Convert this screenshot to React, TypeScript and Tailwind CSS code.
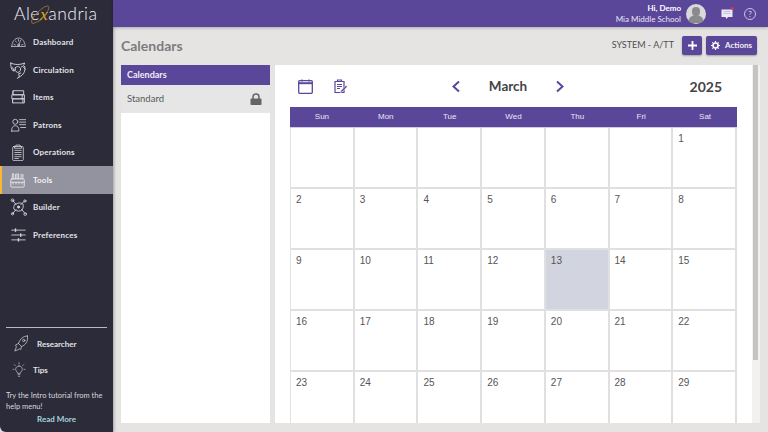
import React from "react";

const S = ({ children, w = 24, h = 24, vb = "0 0 24 24", c = "#cfcfd4", sw = 1 }: any) => (
  <svg width={w} height={h} viewBox={vb} fill="none" stroke={c} strokeWidth={sw} strokeLinecap="round" strokeLinejoin="round">
    {children}
  </svg>
);

const icons: Record<string, React.ReactNode> = {
  Dashboard: (
    <S w={15} h={10} vb="0 0 30 20" sw={1.5}>
      <path d="M1.500 19h27C28 9 22 2 15 2S2 9 1.500 19z" />
      <path d="M15 17l4-10M6 15l3 1M9 8l2 2.500M15 5v3M24 15l-3 1" />
      <circle cx="15" cy="16" r="2" />
    </S>
  ),
  Circulation: (
    <S w={16} h={18} vb="0 0 24 27" sw={1.5}>
      <path d="M1 3c6 3 14 3 21 0-1 3-2 5-5 6M1 3c0 5 1 10 4 12l3-2M22 8c2 7-2 13-8 16l-1-5 3-1M4 10l2 5" />
      <path d="M8 10c3-3 7-2 8 2 0 3-2 5-5 5-3-1-4-4-3-7z" />
      <path d="M11 26l3-2M20 9l3 3" />
    </S>
  ),
  Items: (
    <S w={15} h={14} vb="0 0 20 19" sw={1.300}>
      <path d="M3 1h14v5.500H3zM3 1c-1 2-1 4 0 5.500" />
      <path d="M1.500 6.500H18V12H1.500zM15 6.500V12" />
      <path d="M2.500 12H18v5.500H2.500zM2.500 12c-1 2-1 4 0 5.500M16 12v5.500" />
    </S>
  ),
  Patrons: (
    <S w={15} h={14} vb="0 0 21 19" sw={1.200}>
      <circle cx="6" cy="5" r="3.500" />
      <path d="M1 18c-.5-5 2-7.500 5-7.500s5.500 2.500 5 7.500H1zM12 2h8.500M12 5.500h8.500M12 9h8.500M13.500 13h7" />
    </S>
  ),
  Operations: (
    <S w={12} h={17} vb="0 0 17 24" sw={1.200}>
      <rect x="1" y="3.500" width="15" height="20" rx="1.500" />
      <path d="M5.500 3.500V1.500h6v2h2v2.500h-10V3.500zM4 9h9M4 12h9M4 15h9M4 18h9M4 20.500h5" />
    </S>
  ),
  Tools: (
    <S w={15} h={16} vb="0 0 20 21" c="#ececef" sw={1.100}>
      <rect x="1" y="9" width="18" height="11" rx="1.500" />
      <path d="M1 13.500h18M3 9V4l1-2.500L5 4v5M7.500 9V2.500h2V9M11.500 9V2M14.500 9l.5-6 2.500.5L17 9M4 13.500v2.500M8 13.500v2.500M12 13.500v2.500M16 13.500v2.500" />
    </S>
  ),
  Builder: (
    <S w={17} h={18} vb="0 0 22 24" sw={1.200}>
      <path d="M3 3l5 6M19 4l-5 5M8 15l-5 6M15 15l5 6" />
      <path d="M6 9c3-3 9-3 11-1 1 3 0 8-3 9-3 1-8 0-9-2-1-2 0-5 1-6z" />
      <circle cx="3" cy="3" r="1.800" />
      <circle cx="19.500" cy="4" r="1.500" />
      <circle cx="3" cy="21" r="1.500" />
      <circle cx="20" cy="21.500" r="1.800" />
      <circle cx="11" cy="12" r="1.500" fill="#cfcfd4" />
    </S>
  ),
  Preferences: (
    <S w={15} h={14} vb="0 0 20 18" sw={1.200}>
      <path d="M1 2.500h18M1 9h18M1 15.500h18" />
      <path d="M6 1v3M13 7.500v3M10 14v3" strokeWidth="2" />
    </S>
  ),
};

const nav = ["Dashboard", "Circulation", "Items", "Patrons", "Operations", "Tools", "Builder", "Preferences"];
const days = ["Sun", "Mon", "Tue", "Wed", "Thu", "Fri", "Sat"];
const weeks: (number | null)[][] = [
  [null, null, null, null, null, null, 1],
  [2, 3, 4, 5, 6, 7, 8],
  [9, 10, 11, 12, 13, 14, 15],
  [16, 17, 18, 19, 20, 21, 22],
  [23, 24, 25, 26, 27, 28, 29],
];

export default function App() {
  return (
    <div className="flex h-[432px] w-[768px] overflow-hidden bg-[#e5e4e3] font-['Lato',sans-serif]">
      <aside className="flex h-full w-[113px] shrink-0 flex-col rounded-bl-md bg-[#2b2b3a] text-[#e3e3e6] shadow-[1px_0_3px_rgba(0,0,0,0.3)]">
        <div className="relative h-[28px] pl-[14px] pt-[2px] text-[17.500px] font-light leading-[23px] tracking-[0.5px] text-[#f4f4f6]">
          Ale<span className="font-['Liberation_Serif',serif] italic text-[#e5ab1e]">x</span>andria
          <svg className="absolute left-[30px] top-[4px]" width="20" height="21" viewBox="0 0 20 21" fill="none" stroke="#a5842f" strokeWidth="0.8">
            <path d="M2 19C-1 15 14 1 18 2c3 1-3 12-9 15-4 2-7 3-7 2z" />
          </svg>
        </div>
        <nav className="mt-[0.500px] flex flex-col">
          {nav.map((n) => (
            <div
              key={n}
              className={`flex h-[27.500px] items-center text-[8px] font-bold tracking-[0.2px] ${
                n === "Tools" ? "border-l-2 border-[#f6b92f] bg-[#92939e] text-[#f2f2f4]" : ""
              }`}
            >
              <span className={`flex justify-center ${n === "Tools" ? "w-[31px]" : "w-[33px] pl-[3px]"}`}>{icons[n]}</span>
              <span>{n}</span>
            </div>
          ))}
        </nav>
        <div className="mt-auto flex flex-col px-[6px] pb-[8px]">
          <div className="h-[1px] bg-[#b9b9c0]" />
          <div className="mt-[6px] flex h-[20px] items-center pl-[8px] text-[8px] font-bold">
            <span className="w-[23px]">
              <S w={15} h={17} vb="0 0 20 22">
                <path d="M18 1c-6 0-10 4-12 10l4 4c5-2 9-6 8-14zM6 11l-4 2 1 2M10 15l-1 4-2-1M3 16l-2 5 5-2" />
                <circle cx="13" cy="7" r="1.500" />
              </S>
            </span>
            Researcher
          </div>
          <div className="mt-[6.500px] flex h-[19px] items-center pl-[6px] text-[8px] font-bold">
            <span className="w-[21px]">
              <S w={14} h={16} vb="0 0 20 24">
                <path d="M10 6c-3 0-5 2-5 5 0 2 2 3 3 6h4c1-3 3-4 3-6 0-3-2-5-5-5zM8.500 19h3M9 21.500h2M10 1v2M3 4l1.500 1.500M17 4l-1.500 1.500M1 11h1.500M17.500 11H19" />
              </S>
            </span>
            Tips
          </div>
          <p className="mt-[11px] text-[7.500px] leading-[11px] text-[#d8d8dc]">Try the Intro tutorial from the help menu!</p>
          <div className="mt-[2px] text-center text-[8px] font-bold leading-[10px] text-[#a6d6dc]">Read More</div>
        </div>
      </aside>

      <div className="flex min-w-0 flex-1 flex-col">
        <header className="flex h-[27px] shrink-0 items-center justify-end bg-[#5a479a] shadow-[0_1px_3px_rgba(0,0,0,0.25)]">
          <div className="mr-[5px] text-right text-[8px] leading-[10.500px] text-[#e8e6f2]">
            <div className="font-bold text-white">Hi, Demo</div>
            <div>Mia Middle School</div>
          </div>
          <div className="relative mr-[15px] h-[20px] w-[20px] overflow-hidden rounded-full bg-[#d9d9dc]">
            <div className="mx-auto mt-[3px] h-[9px] w-[8px] rounded-full bg-[#8a8a8e]" />
            <div className="mx-auto mt-[-1px] h-[8px] w-[16px] rounded-t-full bg-[#8a8a8e]" />
          </div>
          <div className="relative mr-[11px] flex">
            <svg width="12" height="12" viewBox="0 0 12 12">
              <path d="M0.500 1.500h11v7.500H7l-1.500 2-1-2H.5z" fill="#eceaf4" />
              <path d="M2.500 3.500h7M2.500 5.500h7" stroke="#b5add2" strokeWidth="0.7" />
            </svg>
            <span className="absolute -right-[1px] -top-[1px] h-[3px] w-[3px] rounded-full bg-[#e2334f]" />
          </div>
          <div className="mr-[12px] flex h-[12px] w-[12px] items-center justify-center rounded-full border border-[#c9c3e0] text-[8px] leading-none text-[#d9d5ea]">?</div>
        </header>

        <div className="flex min-h-0 flex-1 flex-col pl-[8px] pr-[8px]">
          <div className="flex h-[38px] shrink-0 items-center justify-between pb-[2px] pr-[3px]">
            <h1 className="text-[14px] font-bold text-[#7c7c7f]">Calendars</h1>
            <div className="flex items-center">
              <span className="mr-[8px] text-[9px] text-[#4e4e50]">SYSTEM - A/TT</span>
              <button className="flex h-[19px] w-[20px] items-center justify-center rounded-[2px] bg-[#5a479a] text-white shadow-[0_1px_2px_rgba(0,0,0,0.3)]">
                <svg width="11" height="11" viewBox="0 0 11 11"><path d="M5.500 1v9M1 5.500h9" stroke="#fff" strokeWidth="1.800" /></svg>
              </button>
              <button className="ml-[4px] flex h-[19px] w-[51px] items-center justify-center gap-[5px] rounded-[2px] bg-[#5a479a] text-[8px] font-bold text-[#f0eef7] shadow-[0_1px_2px_rgba(0,0,0,0.3)]">
                <svg width="9" height="9" viewBox="0 0 10 10">
                  <circle cx="5" cy="5" r="2.800" fill="none" stroke="#fff" strokeWidth="1.800" />
                  <path d="M5 0v2M5 8v2M0 5h2M8 5h2M1.500 1.500l1.400 1.400M7.100 7.100l1.400 1.400M1.500 8.500l1.400-1.400M7.100 2.900l1.400-1.400" stroke="#fff" strokeWidth="1.300" />
                </svg>
                Actions
              </button>
            </div>
          </div>

          <div className="flex h-[358px] shrink-0">
            <section className="flex w-[149px] shrink-0 flex-col bg-white">
              <div className="flex h-[20px] shrink-0 items-center bg-[#5a479a] pl-[6px] text-[9px] font-bold text-[#f0eef7]">Calendars</div>
              <div className="flex h-[28px] shrink-0 items-center justify-between bg-[#e6e6e6] pl-[6px] pr-[8px] text-[9.500px] text-[#58585a]">
                Standard
                <svg width="12" height="12" viewBox="0 0 12 12">
                  <path d="M3 6V4a3 3 0 0 1 6 0v2" fill="none" stroke="#646466" strokeWidth="1.500" />
                  <rect x="0.500" y="5.500" width="11" height="6.500" rx="1" fill="#646466" />
                </svg>
              </div>
            </section>

            <section className="ml-[5px] flex min-w-0 flex-1 overflow-hidden bg-white">
              <div className="min-w-0 flex-1 pl-[15px]">
                <div className="flex h-[42px] items-center pr-[30px]">
                  <div className="flex w-[115px] shrink-0 items-center pl-[8px]">
                    <svg width="15" height="15" viewBox="0 0 15 15" fill="none" stroke="#5a479a" strokeWidth="1.300">
                      <rect x="0.700" y="1.700" width="13.600" height="12.600" rx="1" />
                      <path d="M.7 4.200h13.600" strokeWidth="2" />
                      <path d="M4 0.500v2M11 0.500v2" />
                    </svg>
                    <svg className="ml-[21px]" width="14" height="15" viewBox="0 0 14 15" fill="none" stroke="#5a479a" strokeWidth="1.200">
                      <path d="M1 2.500h9v11H1zM3.500 2.500V1h4v1.500M3 5.500h5M3 7.500h5M3 9.500h3" />
                      <path d="M6.500 13.500l.5-2 5-5 1.300 1.300-5 5z" fill="#5a479a" stroke="#fff" strokeWidth="0.500" />
                    </svg>
                  </div>
                  <div className="flex flex-1 items-center justify-center">
                    <svg width="10" height="13" viewBox="0 0 10 13" fill="none" stroke="#5a479a" strokeWidth="2"><path d="M8 1.500L2.500 6.500l5.500 5" /></svg>
                    <span className="w-[94px] text-center text-[13.500px] font-bold text-[#444446]">March</span>
                    <svg width="10" height="13" viewBox="0 0 10 13" fill="none" stroke="#5a479a" strokeWidth="2"><path d="M2 1.500l5.500 5-5.500 5" /></svg>
                  </div>
                  <span className="w-[111px] shrink-0 text-right text-[14px] font-bold text-[#444446]">2025</span>
                </div>
                <div className="w-[447px]">
                  <div className="grid h-[20px] grid-cols-7 items-center bg-[#5a479a] text-center font-['Liberation_Sans',sans-serif] text-[8px] text-[#e8e6f2]">
                    {days.map((d) => <div key={d}>{d}</div>)}
                  </div>
                  <div className="h-[1px] bg-[#cfcbe0]" />
                  {weeks.map((w, i) => (
                    <div key={i} className="grid h-[61px] grid-cols-7 border-l border-[#e2e2e2] font-['Liberation_Sans',sans-serif] text-[10px] text-[#555557]">
                      {w.map((d, j) => (
                        <div key={j} className={`border-b-2 border-r-2 border-[#e0e0e0] pl-[5px] pt-[3px] ${d === 13 ? "bg-[#d2d4e0]" : ""}`}>{d}</div>
                      ))}
                    </div>
                  ))}
                </div>
              </div>
              <div className="w-[8px] shrink-0 bg-[#f1f1f1] pl-[1px]">
                <div className="h-[295px] w-[5px] bg-[#c4c4c4]" />
              </div>
            </section>
          </div>
        </div>
      </div>
    </div>
  );
}
